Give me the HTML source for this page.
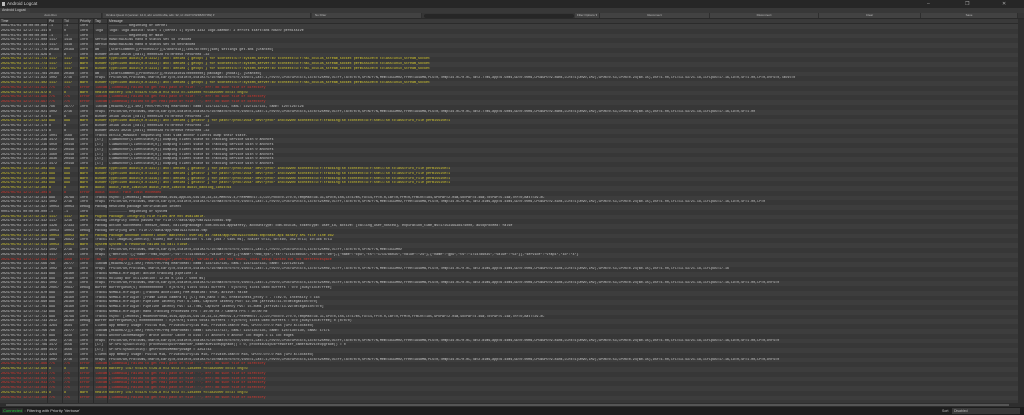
<!DOCTYPE html>
<html><head><meta charset="utf-8"><style>
*{margin:0;padding:0;box-sizing:border-box}
body{width:1024px;height:415px;background:#383838;overflow:hidden;font-family:"Liberation Sans",sans-serif;position:relative;color:#c8c8c8}
.title{position:absolute;left:0;top:0;width:1024px;height:8px;background:#262626;font-size:4.5px;line-height:8px;color:#ccc;padding-left:7px}
.title i{position:absolute;left:2px;top:2px;width:3px;height:4px;background:#bbb}
.ctl{position:absolute;top:0;font-size:5px;line-height:8px;color:#aaa}
.tab{position:absolute;left:0;top:8px;width:30px;height:5px;background:#3c3c3c;font-size:3.5px;line-height:5px;padding-left:2px;color:#ccc}
.tbar{position:absolute;left:0;top:13px;width:1024px;height:6px;background:#353535;border-bottom:1px solid #2a2a2a}
.b{position:absolute;top:0;height:5px;background:#424242;border-right:1px solid #2e2e2e;font-size:3px;line-height:5px;text-align:center;color:#bbb}
.hdr{position:absolute;left:0;top:19px;width:1018px;height:5px;background:#3a3a3a;border-bottom:1px solid #2b2b2b;font-size:3.4px;line-height:5px}
.list{position:absolute;left:0;top:24px;width:1018px;height:379px;overflow:hidden}
.r{height:4.78px;line-height:4.78px;font-family:"Liberation Mono",monospace;font-size:3.35px;white-space:nowrap;position:relative;background:#3d3d3d}
.r:nth-child(even){background:#373737}
.r span,.hdr span{position:absolute;top:0;overflow:hidden}
.c1{left:1px;width:46px}.c2{left:49px;width:13px}.c3{left:64px;width:14px}.c4{left:80px;width:13px}.c5{left:95px;width:12px}.c6{left:109px;width:905px}
.sep{position:absolute;top:19px;height:384px;width:1px;background:#2a2a2a}
.w{color:#d6c92c}.e{color:#e0352c}
.vs{position:absolute;left:1018px;top:19px;width:6px;height:388px;background:#2e2e2e}
.hs{position:absolute;left:0;top:403px;width:1018px;height:4px;background:#2e2e2e}
.hs i{position:absolute;left:6px;top:1px;width:1003px;height:2px;background:#555}
.st{position:absolute;left:0;top:407px;width:1024px;height:8px;background:#1e1e1e;font-size:4px;line-height:8px;color:#ccc}
.st b{font-weight:normal;color:#28c83c;background:#2c2c2c;padding:0 1px;margin-left:2px}
</style></head><body>
<div class="title"><i></i>Android Logcat<span class="ctl" style="left:927px">–</span><span class="ctl" style="left:965px">❐</span><span class="ctl" style="left:1002px">✕</span></div>
<div class="tab">Android Logcat</div>
<div class="tbar">
<div class="b" style="left:0;width:102px">Auto Run</div>
<div class="b" style="left:103px;width:208px;text-align:left;padding-left:3px">Oculus Quest 3 (version: 12.0, abi: arm64-v8a, sdk: 32, id: 2G0YC5ZF8Z0Y0W) ▾</div>
<div class="b" style="left:312px;width:110px;text-align:left;padding-left:3px">No Filter</div>
<div style="position:absolute;left:424px;top:1px;width:150px;height:4px;background:#262626;border-radius:2px"></div>
<div class="b" style="left:575px;width:25px">Filter Options ▾</div>
<div class="b" style="left:600px;width:110px">Reconnect</div>
<div class="b" style="left:710px;width:109px">Disconnect</div>
<div class="b" style="left:819px;width:102px">Clear</div>
<div class="b" style="left:921px;width:97px">Save</div>
</div>
<div class="hdr"><span class="c1">Time</span><span class="c2">Pid</span><span class="c3">Tid</span><span class="c4">Priority</span><span class="c5">Tag</span><span class="c6">Message</span></div>
<div class="list">
<div class="r"><span class="c1">0001/01/01 00:00:00.000</span><span class="c2">-1</span><span class="c3">-1</span><span class="c4">Info</span><span class="c5"></span><span class="c6">--------- beginning of kernel</span></div>
<div class="r"><span class="c1">2024/05/03 12:27:11.341</span><span class="c2">0</span><span class="c3">0</span><span class="c4">Info</span><span class="c5">logd</span><span class="c6">logd: logd.auditd: start 1 (kernel 1) bytes 3342 logd.daemon: 2 errors start=4ms now=0 permissive</span></div>
<div class="r"><span class="c1">0001/01/01 00:00:00.000</span><span class="c2">-1</span><span class="c3">-1</span><span class="c4">Info</span><span class="c5"></span><span class="c6">--------- beginning of main</span></div>
<div class="r"><span class="c1">2024/05/03 12:27:11.000</span><span class="c2">1117</span><span class="c3">1419</span><span class="c4">Info</span><span class="c5">Service</span><span class="c6">HANDTRACKING hand 0 status set to Tracked</span></div>
<div class="r"><span class="c1">2024/05/03 12:27:11.422</span><span class="c2">1117</span><span class="c3">1419</span><span class="c4">Info</span><span class="c5">Service</span><span class="c6">HANDTRACKING hand 0 status set to Untracked</span></div>
<div class="r"><span class="c1">2024/05/03 12:27:11.778</span><span class="c2">20168</span><span class="c3">20168</span><span class="c4">Info</span><span class="c5">am</span><span class="c6">[startComment][ProcessCtr][4/Android][7306/8c7000][sdm] settings get.sms [Granted]</span></div>
<div class="r"><span class="c1">2024/05/03 12:27:11.929</span><span class="c2">8</span><span class="c3">8</span><span class="c4">Info</span><span class="c5">Binder</span><span class="c6">30196 30216 [call] 00000128 FD:0F0050 returned -32</span></div>
<div class="r w"><span class="c1">2024/05/03 12:27:11.773</span><span class="c2">1117</span><span class="c3">1117</span><span class="c4">Warn</span><span class="c5">Binder</span><span class="c6">type=1400 audit(0.0:3312): avc: denied { getopt } for scontext=u:r:system_server:s0 tcontext=u:r:hal_oculus_stream_socket permissive=0 tclass=unix_stream_socket</span></div>
<div class="r w"><span class="c1">2024/05/03 12:27:11.773</span><span class="c2">1117</span><span class="c3">1117</span><span class="c4">Warn</span><span class="c5">Binder</span><span class="c6">type=1400 audit(0.0:3313): avc: denied { getopt } for scontext=u:r:system_server:s0 tcontext=u:r:hal_oculus_stream_socket permissive=0 tclass=unix_stream_socket</span></div>
<div class="r w"><span class="c1">2024/05/03 12:27:11.773</span><span class="c2">1117</span><span class="c3">1117</span><span class="c4">Warn</span><span class="c5">Binder</span><span class="c6">type=1400 audit(0.0:3314): avc: denied { getopt } for scontext=u:r:system_server:s0 tcontext=u:r:hal_oculus_stream_socket permissive=0 tclass=unix_stream_socket</span></div>
<div class="r"><span class="c1">2024/05/03 12:27:11.784</span><span class="c2">20168</span><span class="c3">20168</span><span class="c4">Info</span><span class="c5">am</span><span class="c6">[startComment][ProcessCtr][70150181019700000000] package: [nodal], [Granted]</span></div>
<div class="r"><span class="c1">2024/05/03 12:27:11.822</span><span class="c2">1002</span><span class="c3">2716</span><span class="c4">Info</span><span class="c5">VrApi</span><span class="c6">FPS=90/90,Prd=45ms,Tear=0,Early=0,Stale=0,Stale2/5/10/max=0/0/0/0,VSnc=1,Lat=-1,Fov=0,CPU4/GPU=4/4,1478/525MHz,OC=FF,TA=0/0/0,SP=N/F/N,Mem=1833MHz,Free=1949MB,PLS=0,Temp=34.0C/0.0C,TW=2.77ms,App=6.50ms,GD=0.00ms,CPU&GPU=9.86ms,LCnt=1(DR90,LM2),GPU%=0.53,CPU%=0.24(W0.35),DSF=1.00,CFL=13.43/21.18,ICFLp95=17.16,LD=0,SF=1.00,LP=0,DVFS=0,TaUst=0</span></div>
<div class="r w"><span class="c1">2024/05/03 12:27:11.402</span><span class="c2">1117</span><span class="c3">1117</span><span class="c4">Warn</span><span class="c5">Binder</span><span class="c6">type=1400 audit(0.0:3315): avc: denied { getopt } for scontext=u:r:system_server:s0 tcontext=u:r:hal_oculus_stream_socket permissive=0 tclass=unix_stream_socket</span></div>
<div class="r e"><span class="c1">2024/05/03 12:27:11.921</span><span class="c2">775</span><span class="c3">775</span><span class="c4">Error</span><span class="c5">libcamera</span><span class="c6">[libmedia] Failed to get real path of file: '', err: No such file or directory</span></div>
<div class="r w"><span class="c1">2024/05/03 12:27:11.972</span><span class="c2">8</span><span class="c3">8</span><span class="c4">Warn</span><span class="c5">healthd</span><span class="c6">battery l=97 v=4375 t=29.8 h=2 st=2 c=-1303000 fc=3825000 cc=37 chg=u</span></div>
<div class="r e"><span class="c1">2024/05/03 12:27:11.986</span><span class="c2">775</span><span class="c3">775</span><span class="c4">Error</span><span class="c5">libcamera</span><span class="c6">[libmedia] Failed to get real path of file: '', err: No such file or directory</span></div>
<div class="r e"><span class="c1">2024/05/03 12:27:11.997</span><span class="c2">775</span><span class="c3">775</span><span class="c4">Error</span><span class="c5">libcamera</span><span class="c6">[libmedia] Failed to get real path of file: '', err: No such file or directory</span></div>
<div class="r"><span class="c1">2024/05/03 12:27:12.004</span><span class="c2">796</span><span class="c3">26777</span><span class="c4">Info</span><span class="c5">libcamera</span><span class="c6">[HEAD0672][1.4Hz] recv/ret/req heartbeat: camN: 121/133/133, camL: 119/131/131, camR: 120/126/126</span></div>
<div class="r"><span class="c1">2024/05/03 12:27:12.021</span><span class="c2">1002</span><span class="c3">2716</span><span class="c4">Info</span><span class="c5">VrApi</span><span class="c6">FPS=90/90,Prd=45ms,Tear=0,Early=0,Stale=0,Stale2/5/10/max=0/0/0/0,VSnc=1,Lat=-1,Fov=0,CPU4/GPU=4/4,1478/525MHz,OC=FF,TA=0/0/0,SP=N/F/N,Mem=1833MHz,Free=1949MB,PLS=0,Temp=34.0C/0.0C,TW=2.77ms,App=6.50ms,GD=0.00ms,CPU&GPU=9.86ms,LCnt=1(DR90,LM2),GPU%=0.53,CPU%=0.24(W0.35),DSF=1.00,CFL=13.43/21.18,ICFLp95=17.16,LD=0,SF=1.00</span></div>
<div class="r"><span class="c1">2024/05/03 12:27:12.073</span><span class="c2">8</span><span class="c3">8</span><span class="c4">Info</span><span class="c5">Binder</span><span class="c6">30196 30216 [call] 00000128 FD:0F0050 returned -32</span></div>
<div class="r w"><span class="c1">2024/05/03 12:27:12.123</span><span class="c2">999</span><span class="c3">999</span><span class="c4">Warn</span><span class="c5">Binder</span><span class="c6">type=1400 audit(0.0:3316): avc: denied { getattr } for path="/proc/2034" dev="proc" ino=49900 scontext=u:r:tracking:s0 tcontext=u:r:shell:s0 tclass=fifo_file permissive=1</span></div>
<div class="r"><span class="c1">2024/05/03 12:27:12.170</span><span class="c2">8</span><span class="c3">8</span><span class="c4">Info</span><span class="c5">Binder</span><span class="c6">30196 30216 [call] 00000128 FD:0F0050 returned -32</span></div>
<div class="r"><span class="c1">2024/05/03 12:27:12.171</span><span class="c2">8</span><span class="c3">8</span><span class="c4">Info</span><span class="c5">Binder</span><span class="c6">30221 30216 [call] 00000128 FD:0F0050 returned -32</span></div>
<div class="r"><span class="c1">2024/05/03 12:27:12.222</span><span class="c2">1001</span><span class="c3">1568</span><span class="c4">Info</span><span class="c5">Tracking</span><span class="c6">DEVICE_MANAGER: Requesting that slam anchor clients dump their state.</span></div>
<div class="r"><span class="c1">2024/05/03 12:27:12.236</span><span class="c2">3472</span><span class="c3">20448</span><span class="c4">Info</span><span class="c5">[CT]</span><span class="c6">ClamAnchor(ClientState[0]) Dumping client state to Tracking Service with 0 anchors</span></div>
<div class="r"><span class="c1">2024/05/03 12:27:12.236</span><span class="c2">4050</span><span class="c3">20448</span><span class="c4">Info</span><span class="c5">[CT]</span><span class="c6">ClamAnchor(ClientState[0]) Dumping client state to Tracking Service with 0 anchors</span></div>
<div class="r"><span class="c1">2024/05/03 12:27:12.236</span><span class="c2">4452</span><span class="c3">20448</span><span class="c4">Info</span><span class="c5">[CT]</span><span class="c6">ClamAnchor(ClientState[0]) Dumping client state to Tracking Service with 0 anchors</span></div>
<div class="r"><span class="c1">2024/05/03 12:27:12.237</span><span class="c2">3960</span><span class="c3">20448</span><span class="c4">Info</span><span class="c5">[CT]</span><span class="c6">ClamAnchor(ClientState[0]) Dumping client state to Tracking Service with 0 anchors</span></div>
<div class="r"><span class="c1">2024/05/03 12:27:12.237</span><span class="c2">3936</span><span class="c3">20448</span><span class="c4">Info</span><span class="c5">[CT]</span><span class="c6">ClamAnchor(ClientState[0]) Dumping client state to Tracking Service with 0 anchors</span></div>
<div class="r"><span class="c1">2024/05/03 12:27:12.237</span><span class="c2">3472</span><span class="c3">20448</span><span class="c4">Info</span><span class="c5">[CT]</span><span class="c6">ClamAnchor(ClientState[0]) Dumping client state to Tracking Service with 0 anchors</span></div>
<div class="r w"><span class="c1">2024/05/03 12:27:12.303</span><span class="c2">999</span><span class="c3">999</span><span class="c4">Warn</span><span class="c5">Binder</span><span class="c6">type=1400 audit(0.0:3317): avc: denied { getattr } for path="/proc/2034" dev="proc" ino=49900 scontext=u:r:tracking:s0 tcontext=u:r:shell:s0 tclass=fifo_file permissive=1</span></div>
<div class="r w"><span class="c1">2024/05/03 12:27:12.303</span><span class="c2">999</span><span class="c3">999</span><span class="c4">Warn</span><span class="c5">Binder</span><span class="c6">type=1400 audit(0.0:3318): avc: denied { getattr } for path="/proc/2034" dev="proc" ino=49900 scontext=u:r:tracking:s0 tcontext=u:r:shell:s0 tclass=fifo_file permissive=1</span></div>
<div class="r w"><span class="c1">2024/05/03 12:27:12.303</span><span class="c2">999</span><span class="c3">999</span><span class="c4">Warn</span><span class="c5">Binder</span><span class="c6">type=1400 audit(0.0:3319): avc: denied { getattr } for path="/proc/2034" dev="proc" ino=49900 scontext=u:r:tracking:s0 tcontext=u:r:shell:s0 tclass=fifo_file permissive=1</span></div>
<div class="r w"><span class="c1">2024/05/03 12:27:12.303</span><span class="c2">999</span><span class="c3">999</span><span class="c4">Warn</span><span class="c5">Binder</span><span class="c6">type=1400 audit(0.0:3320): avc: denied { getattr } for path="/proc/2034" dev="proc" ino=49900 scontext=u:r:tracking:s0 tcontext=u:r:shell:s0 tclass=fifo_file permissive=1</span></div>
<div class="r w"><span class="c1">2024/05/03 12:27:12.303</span><span class="c2">8</span><span class="c3">8</span><span class="c4">Warn</span><span class="c5">audit</span><span class="c6">audit_rate_limit=20 audit_rate_limit=8 audit_backlog_limit=64</span></div>
<div class="r e"><span class="c1">2024/05/03 12:27:12.304</span><span class="c2">8</span><span class="c3">8</span><span class="c4">Error</span><span class="c5">audit</span><span class="c6">audit: rate limit exceeded</span></div>
<div class="r"><span class="c1">2024/05/03 12:27:12.313</span><span class="c2">999</span><span class="c3">26799</span><span class="c4">Info</span><span class="c5">Tracking</span><span class="c6">vsync: [IMU0043] ModeOverhead,4549,AppLDG,549:28,33,33,Mem=59.4,FreeMem=17.3,CL0,Pocd=0.2/0.0,TempMax=36.3C,GPU=0,15%,Ct=17ms,Fu=14,FP=0.0,CBF=0,PFM=0,FrmCnt=184,GPUPwr=2.04W,SocPwr=4.46W,TotPwr=5.14W,Thr=0,BatT=29.8C</span></div>
<div class="r"><span class="c1">2024/05/03 12:27:12.421</span><span class="c2">1002</span><span class="c3">2716</span><span class="c4">Info</span><span class="c5">VrApi</span><span class="c6">FPS=90/90,Prd=45ms,Tear=0,Early=0,Stale=0,Stale2/5/10/max=0/0/0/0,VSnc=1,Lat=-1,Fov=0,CPU4/GPU=4/4,1478/525MHz,OC=FF,TA=0/0/0,SP=N/F/N,Mem=1833MHz,Free=1948MB,PLS=0,Temp=34.0C/0.0C,TW=2.81ms,App=6.44ms,GD=0.00ms,CPU&GPU=9.81ms,LCnt=1(DR90,LM2),GPU%=0.53,CPU%=0.24(W0.35),DSF=1.00,CFL=13.43/21.18,ICFLp95=17.16,LD=0,SF=1.00,LP=0</span></div>
<div class="r"><span class="c1">2024/05/03 12:27:12.427</span><span class="c2">10053</span><span class="c3">10053</span><span class="c4">Debug</span><span class="c5">Package</span><span class="c6">Resolved package verification intent</span></div>
<div class="r"><span class="c1">0001/01/01 00:00:00.000</span><span class="c2">-1</span><span class="c3">-1</span><span class="c4">Info</span><span class="c5"></span><span class="c6">--------- beginning of system</span></div>
<div class="r w"><span class="c1">2024/05/03 12:27:12.427</span><span class="c2">1117</span><span class="c3">1117</span><span class="c4">Warn</span><span class="c5">Pkgchk</span><span class="c6">Package: Integrity rule files are not available.</span></div>
<div class="r"><span class="c1">2024/05/03 12:27:12.432</span><span class="c2">1117</span><span class="c3">1216</span><span class="c4">Info</span><span class="c5">Package</span><span class="c6">Integrity check passed for file:///data/app/vmdl933750846.tmp</span></div>
<div class="r"><span class="c1">2024/05/03 12:27:12.440</span><span class="c2">1326</span><span class="c3">27333</span><span class="c4">Info</span><span class="c5">Package</span><span class="c6">Action succeeded: 000420_78690, callingPackage: com.oculus.appsafety, accountType: com.oculus, tokenType: user_id, active: [calling_user_hosted], expiration_time_ms=1715316938474000, autoproceed: false</span></div>
<div class="r"><span class="c1">2024/05/03 12:27:12.443</span><span class="c2">10053</span><span class="c3">10053</span><span class="c4">Debug</span><span class="c5">Package</span><span class="c6">Verifying APK: file:///data/app/vmdl933750846.tmp</span></div>
<div class="r w"><span class="c1">2024/05/03 12:27:12.451</span><span class="c2">10053</span><span class="c3">10053</span><span class="c4">Warn</span><span class="c5">Package</span><span class="c6">Package unknown channel under manifest: overlay at /data/app/vmdl933750846.tmp/base.apk Binary XML file line #82</span></div>
<div class="r"><span class="c1">2024/05/03 12:27:12.460</span><span class="c2">999</span><span class="c3">26822</span><span class="c4">Info</span><span class="c5">Tracking</span><span class="c6">ELT ImageId(Identity; Video) BUF utilization: 5.736 (264 / 5465 ms), Scaler 0/13, SR:460, 359 0/13; 10:366 0/13</span></div>
<div class="r w"><span class="c1">2024/05/03 12:27:12.513</span><span class="c2">10053</span><span class="c3">10053</span><span class="c4">Warn</span><span class="c5">System</span><span class="c6">System: A resource failed to call close.</span></div>
<div class="r"><span class="c1">2024/05/03 12:27:12.521</span><span class="c2">1002</span><span class="c3">2716</span><span class="c4">Info</span><span class="c5">VrApi</span><span class="c6">FPS=90/90,Prd=45ms,Tear=0,Early=0,Stale=0,Stale2/5/10/max=0/0/0/0,VSnc=1,Lat=-1,Fov=0,CPU4/GPU=4/4,1478/525MHz,OC=FF,TA=0/0/0,SP=N/F/N,Mem=1833MHz</span></div>
<div class="r"><span class="c1">2024/05/03 12:27:12.542</span><span class="c2">1117</span><span class="c3">27201</span><span class="c4">Info</span><span class="c5">VrApi</span><span class="c6">{"metrics":[{"name":"hmd_vsync","ts":"1714786035","value":"90"},{"name":"hmd_fps","ts":"1714786035","value":"90"},{"name":"cpu","ts":"1714786035","value":"24"},{"name":"gpu","ts":"1714786035","value":"53"}],"service":"vrapi","id":"4"}</span></div>
<div class="r e"><span class="c1">2024/05/03 12:27:12.563</span><span class="c2">1117</span><span class="c3">1458</span><span class="c4">Error</span><span class="c5">TBD</span><span class="c6">OVRPlugin ReferenceSpaceManager[Interface]: Variable 1 was not found, local setup hinted but not ReferenceSpace</span></div>
<div class="r"><span class="c1">2024/05/03 12:27:12.566</span><span class="c2">796</span><span class="c3">26777</span><span class="c4">Info</span><span class="c5">libcamera</span><span class="c6">[HEAD0672][1.4Hz] recv/ret/req heartbeat: camN: 123/135/135, camL: 121/133/133, camR: 122/128/128</span></div>
<div class="r"><span class="c1">2024/05/03 12:27:12.620</span><span class="c2">1002</span><span class="c3">2716</span><span class="c4">Info</span><span class="c5">VrApi</span><span class="c6">FPS=90/90,Prd=45ms,Tear=0,Early=0,Stale=0,Stale2/5/10/max=0/0/0/0,VSnc=1,Lat=-1,Fov=0,CPU4/GPU=4/4,1478/525MHz,OC=FF,TA=0/0/0,SP=N/F/N,Mem=1833MHz,Free=1948MB,PLS=0,Temp=34.0C/0.0C,TW=2.81ms,App=6.44ms,GD=0.00ms,CPU&GPU=9.81ms,LCnt=1(DR90,LM2),GPU%=0.53,CPU%=0.24(W0.35),DSF=1.00,CFL=13.43/21.18,ICFLp95=17.16</span></div>
<div class="r"><span class="c1">2024/05/03 12:27:12.634</span><span class="c2">999</span><span class="c3">26160</span><span class="c4">Info</span><span class="c5">Tracking</span><span class="c6">NOMBLE-HTPlugin: active tracking pipeline: 3</span></div>
<div class="r"><span class="c1">2024/05/03 12:27:12.640</span><span class="c2">999</span><span class="c3">26160</span><span class="c4">Info</span><span class="c5">Tracking</span><span class="c6">Holiday BUF utilization: 12.08 % (244 / 5000 ms)</span></div>
<div class="r"><span class="c1">2024/05/03 12:27:12.651</span><span class="c2">1002</span><span class="c3">2716</span><span class="c4">Info</span><span class="c5">VrApi</span><span class="c6">FPS=90/90,Prd=45ms,Tear=0,Early=0,Stale=0,Stale2/5/10/max=0/0/0/0,VSnc=1,Lat=-1,Fov=0,CPU4/GPU=4/4,1478/525MHz,OC=FF,TA=0/0/0,SP=N/F/N,Mem=1833MHz,Free=1948MB,PLS=0,Temp=34.0C/0.0C,TW=2.81ms,App=6.44ms,GD=0.00ms,CPU&GPU=9.81ms,LCnt=1(DR90,LM2),GPU%=0.53,CPU%=0.24(W0.35),DSF=1.00,CFL=13.43/21.18,ICFLp95=17.16,LD=0,SF=1.00,LP=0,DVFS=0</span></div>
<div class="r"><span class="c1">2024/05/03 12:27:12.662</span><span class="c2">20857</span><span class="c3">20937</span><span class="c4">Debug</span><span class="c5">BufferQ</span><span class="c6">BufferQueue(s) 0x0000000000 : H[0/0/0] slots total buffers : 0[0/0/0] slots used buffers : 0/0 [busy/idle/free]</span></div>
<div class="r"><span class="c1">2024/05/03 12:27:12.670</span><span class="c2">999</span><span class="c3">26160</span><span class="c4">Info</span><span class="c5">Tracking</span><span class="c6">NOMBLE-HTPlugin: [Tracked accel=180] FHM enabled: true, active: false</span></div>
<div class="r"><span class="c1">2024/05/03 12:27:12.681</span><span class="c2">999</span><span class="c3">26160</span><span class="c4">Info</span><span class="c5">Tracking</span><span class="c6">NOMBLE-HTPlugin: [Frame 13046 camera 0] [CT] has_hand = NO, breathiness_proxy = - 7749.0, intensity = 164</span></div>
<div class="r"><span class="c1">2024/05/03 12:27:12.690</span><span class="c2">999</span><span class="c3">26160</span><span class="c4">Info</span><span class="c5">Tracking</span><span class="c6">NOMBLE-HTPlugin: Pipeline latency P50: 6.73ms, Capture latency P50: 12.7ms [arrival:11.0/delegation:0/0]</span></div>
<div class="r"><span class="c1">2024/05/03 12:27:12.701</span><span class="c2">999</span><span class="c3">26160</span><span class="c4">Info</span><span class="c5">Tracking</span><span class="c6">NOMBLE-HTPlugin: Pipeline latency P95: 13.77ms, Capture latency P95: 15.80ms [arrival:13.99/delegation:0/0]</span></div>
<div class="r"><span class="c1">2024/05/03 12:27:12.712</span><span class="c2">999</span><span class="c3">26160</span><span class="c4">Info</span><span class="c5">Tracking</span><span class="c6">NOMBLE-HTPlugin: Hand Tracking Processed FPS : 30.00 Hz / Camera FPS : 30.00 Hz</span></div>
<div class="r"><span class="c1">2024/05/03 12:27:12.721</span><span class="c2">999</span><span class="c3">26799</span><span class="c4">Info</span><span class="c5">Tracking</span><span class="c6">vsync: [IMU0045] ModeOverhead,4549,AppLDG,549:28,33,33,Mem=59.4,FreeMem=17.3,CL0,Pocd=0.2/0.0,TempMax=36.3C,GPU=0,15%,Ct=17ms,Fu=14,FP=0.0,CBF=0,PFM=0,FrmCnt=185,GPUPwr=2.04W,SocPwr=4.46W,TotPwr=5.14W,Thr=0,BatT=29.8C</span></div>
<div class="r"><span class="c1">2024/05/03 12:27:12.733</span><span class="c2">2912</span><span class="c3">26160</span><span class="c4">Debug</span><span class="c5">BufferQ</span><span class="c6">BufferQueue(s) 0x0000000000 : H[0/0/0] slots total buffers : 0[0/0/0] slots used buffers : 0/0 [busy/idle/free] 0 (0/0/0)</span></div>
<div class="r"><span class="c1">2024/05/03 12:27:12.745</span><span class="c2">3264</span><span class="c3">3584</span><span class="c4">Info</span><span class="c5">ClientD</span><span class="c6">App memory usage: PSS=49 MiB, PrivateDirty=39 MiB, PrivateClean=0 MiB, GPU=0.0/0.0 MiB (GPU allocated)</span></div>
<div class="r"><span class="c1">2024/05/03 12:27:12.756</span><span class="c2">796</span><span class="c3">26777</span><span class="c4">Info</span><span class="c5">libcamera</span><span class="c6">[HEAD0672][1.4Hz] recv/ret/req heartbeat: camN: 125/137/137, camL: 123/135/135, camR: 124/130/130, camA: 1/1/1</span></div>
<div class="r"><span class="c1">2024/05/03 12:27:12.767</span><span class="c2">999</span><span class="c3">3248</span><span class="c4">Info</span><span class="c5">Tracking</span><span class="c6">AnchorCacheManager: Wrote Anchor Cache To Disk: 27 anchors 0 anchor loc edges 3 11 loc edges</span></div>
<div class="r"><span class="c1">2024/05/03 12:27:12.778</span><span class="c2">1002</span><span class="c3">2716</span><span class="c4">Info</span><span class="c5">VrApi</span><span class="c6">FPS=90/90,Prd=45ms,Tear=0,Early=0,Stale=0,Stale2/5/10/max=0/0/0/0,VSnc=1,Lat=-1,Fov=0,CPU4/GPU=4/4,1478/525MHz,OC=FF,TA=0/0/0,SP=N/F/N,Mem=1833MHz,Free=1948MB,PLS=0,Temp=34.0C/0.0C,TW=2.81ms,App=6.44ms,GD=0.00ms,CPU&GPU=9.81ms,LCnt=1(DR90,LM2),GPU%=0.53,CPU%=0.24(W0.35),DSF=1.00,CFL=13.43/21.18,ICFLp95=17.16,LD=0,SF=1.00,LP=0,DVFS=0</span></div>
<div class="r"><span class="c1">2024/05/03 12:27:12.789</span><span class="c2">3472</span><span class="c3">3556</span><span class="c4">Info</span><span class="c5">[CT]</span><span class="c6">SP:SPS:SysActivity: processOutputPreWorker_cameraDeviceUpgrade() = 0, processOutputPreWorker_cameraDeviceUpgrade() = 0</span></div>
<div class="r"><span class="c1">2024/05/03 12:27:12.800</span><span class="c2">3472</span><span class="c3">3556</span><span class="c4">Info</span><span class="c5">[CT]</span><span class="c6">SP:SPS:SysActivity: getProcessMemoryUsage = 3253743</span></div>
<div class="r"><span class="c1">2024/05/03 12:27:12.811</span><span class="c2">3264</span><span class="c3">3584</span><span class="c4">Info</span><span class="c5">ClientD</span><span class="c6">App memory usage: PSS=49 MiB, PrivateDirty=39 MiB, PrivateClean=0 MiB, GPU=0.0/0.0 MiB (GPU allocated)</span></div>
<div class="r"><span class="c1">2024/05/03 12:27:12.822</span><span class="c2">1002</span><span class="c3">2716</span><span class="c4">Info</span><span class="c5">VrApi</span><span class="c6">FPS=90/90,Prd=45ms,Tear=0,Early=0,Stale=0,Stale2/5/10/max=0/0/0/0,VSnc=1,Lat=-1,Fov=0,CPU4/GPU=4/4,1478/525MHz,OC=FF,TA=0/0/0,SP=N/F/N,Mem=1833MHz,Free=1948MB,PLS=0,Temp=34.0C/0.0C,TW=2.81ms,App=6.44ms,GD=0.00ms,CPU&GPU=9.81ms,LCnt=1(DR90,LM2),GPU%=0.53,CPU%=0.24(W0.35),DSF=1.00,CFL=13.43/21.18,ICFLp95=17.16,LD=0,SF=1.00,LP=0,DVFS=0</span></div>
<div class="r e"><span class="c1">2024/05/03 12:27:12.866</span><span class="c2">775</span><span class="c3">775</span><span class="c4">Error</span><span class="c5">libcamera</span><span class="c6">[libmedia] Failed to get real path of file: '', err: No such file or directory</span></div>
<div class="r w"><span class="c1">2024/05/03 12:27:12.950</span><span class="c2">8</span><span class="c3">8</span><span class="c4">Warn</span><span class="c5">healthd</span><span class="c6">battery l=97 v=4375 t=29.8 h=2 st=2 c=-1303000 fc=3825000 cc=37 chg=u</span></div>
<div class="r e"><span class="c1">2024/05/03 12:27:13.011</span><span class="c2">775</span><span class="c3">775</span><span class="c4">Error</span><span class="c5">libcamera</span><span class="c6">[libmedia] Failed to get real path of file: '', err: No such file or directory</span></div>
<div class="r e"><span class="c1">2024/05/03 12:27:13.022</span><span class="c2">775</span><span class="c3">775</span><span class="c4">Error</span><span class="c5">libcamera</span><span class="c6">[libmedia] Failed to get real path of file: '', err: No such file or directory</span></div>
<div class="r e"><span class="c1">2024/05/03 12:27:13.033</span><span class="c2">775</span><span class="c3">775</span><span class="c4">Error</span><span class="c5">libcamera</span><span class="c6">[libmedia] Failed to get real path of file: '', err: No such file or directory</span></div>
<div class="r e"><span class="c1">2024/05/03 12:27:13.044</span><span class="c2">775</span><span class="c3">775</span><span class="c4">Error</span><span class="c5">libcamera</span><span class="c6">[libmedia] Failed to get real path of file: '', err: No such file or directory</span></div>
<div class="r w"><span class="c1">2024/05/03 12:27:13.101</span><span class="c2">8</span><span class="c3">8</span><span class="c4">Warn</span><span class="c5">healthd</span><span class="c6">battery l=97 v=4375 t=29.8 h=2 st=2 c=-1303000 fc=3825000 cc=37 chg=u</span></div>
<div class="r e"><span class="c1">2024/05/03 12:27:13.160</span><span class="c2">775</span><span class="c3">775</span><span class="c4">Error</span><span class="c5">libcamera</span><span class="c6">[libmedia] Failed to get real path of file: '', err: No such file or directory</span></div>
</div>
<div class="sep" style="left:47px"></div><div class="sep" style="left:62px"></div><div class="sep" style="left:78px"></div><div class="sep" style="left:93px"></div><div class="sep" style="left:107px"></div>
<div class="vs"></div>
<div class="hs"><i></i></div>
<div class="st"><b>Connected</b> : Filtering with Priority 'Verbose'
<span style="position:absolute;left:942px;top:1px;height:6px;line-height:6px;font-size:3.5px;color:#bbb">Sort</span>
<span style="position:absolute;left:952px;top:1px;width:68px;height:6px;line-height:6px;font-size:3.5px;background:#3a3a3a;color:#bbb;padding-left:2px">Disabled</span></div>
</body></html>
